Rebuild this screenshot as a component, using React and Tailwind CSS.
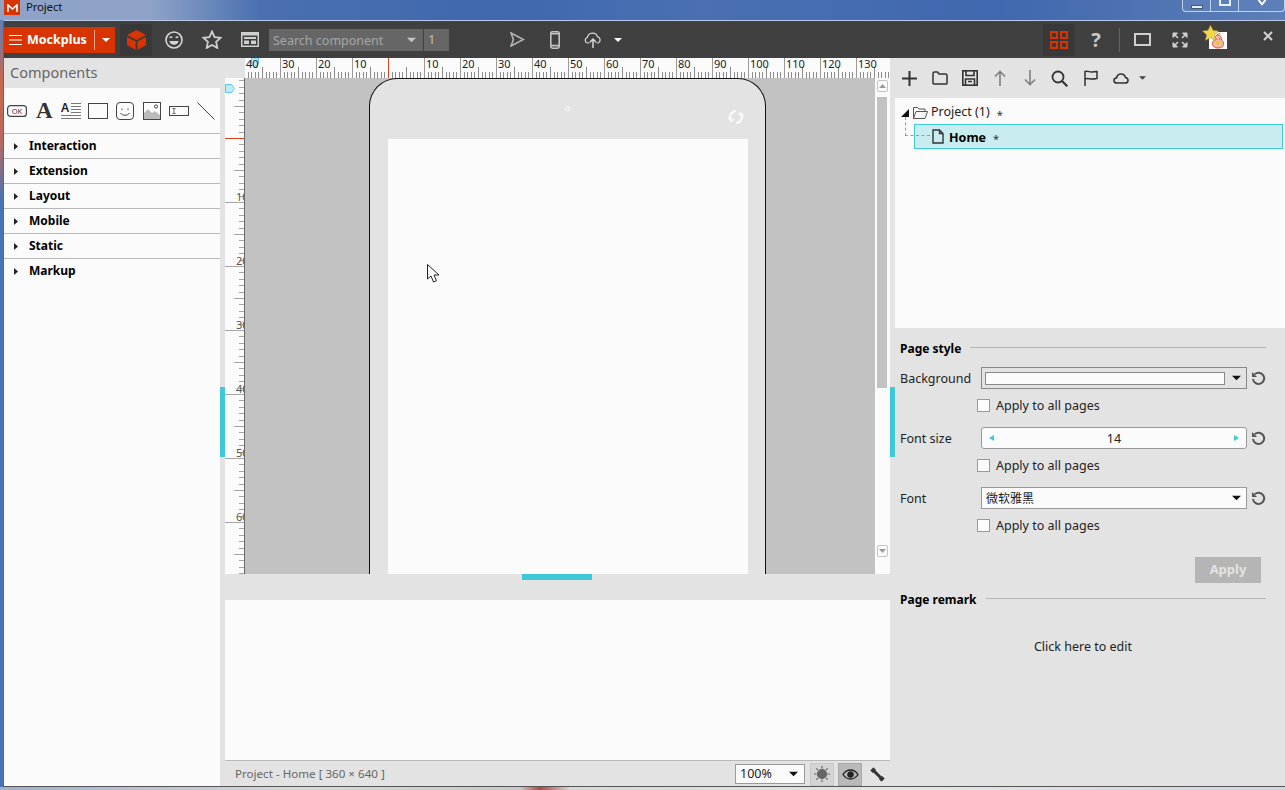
import React from 'react';

const range = (from, to) => Array.from({ length: to - from + 1 }, (_, i) => from + i);

function TopRuler() {
  return (
    <svg width="645" height="20" className="relative block">
      {range(-40, 140).map((i) => {
        const x = Math.round(143 + i * 3.6) + 0.5;
        const top = i % 10 === 0 ? 0 : i % 5 === 0 ? 9 : 14;
        return <line key={i} x1={x} x2={x} y1={top} y2="20" stroke={i === 0 ? '#e0421c' : i % 10 === 0 ? '#9a9a9a' : '#8c8c8c'} />;
      })}
      {range(-4, 13).filter((n) => n !== 0).map((n) => (
        <text key={n} x={143 + n * 36 + 2} y="10" fontSize="11" fill="#222">
          {Math.abs(n) * 10}
        </text>
      ))}
    </svg>
  );
}

function LeftRuler() {
  return (
    <svg width="20" height="496" className="block">
      {range(-9, 68).map((i) => {
        const y = Math.round(60 + i * 6.4) + 0.5;
        const left = i % 10 === 0 ? 0 : i % 5 === 0 ? 9 : 14;
        return <line key={i} x1={left} x2="20" y1={y} y2={y} stroke={i === 0 ? '#e0421c' : '#a6a6a6'} />;
      })}
      {range(1, 6).map((n) => (
        <text key={n} x="11" y={60 + n * 64 - 1} fontSize="11" fill="#555">
          {n * 10}
        </text>
      ))}
      <line x1="19.5" x2="19.5" y1="0" y2="496" stroke="#6a6a6a" />
    </svg>
  );
}

const Caret = ({ color = '#fff', w = 8, h = 4 }) => (
  <svg width={w} height={h} viewBox="0 0 8 4" className="block shrink-0">
    <path d="M0 0h8L4 4z" fill={color} />
  </svg>
);

const Reset = () => (
  <svg width="15" height="15" viewBox="0 0 15 15" fill="none" stroke="#555" strokeWidth="2" className="block shrink-0">
    <path d="M3.6 3.4A5.6 5.6 0 1 1 2 8" />
    <path d="M1 1l5 5H1z" fill="#555" stroke="none" />
  </svg>
);

function ApplyCheck() {
  return (
    <div className="mt-[10px] flex h-[13px] items-center pl-[77px]">
      <span className="h-[13px] w-[13px] border border-[#9a9a9a] bg-[#fbfbfb]" />
      <span className="ml-[6px] pt-[2px] text-[12.5px] leading-none text-[#222]">Apply to all pages</span>
    </div>
  );
}

function SectionTitle({ title }) {
  return (
    <div className="flex h-[20px] items-center">
      <span className="pt-[2px] text-[12px] font-bold text-black">{title}</span>
      <span className="mb-[2px] ml-[9px] h-px flex-1 bg-[#b4b4b4]" />
    </div>
  );
}

function FormRow({ label, children }) {
  return (
    <div className="flex h-[22px] items-center">
      <span className="w-[81px] pt-[2px] text-[12.5px] text-[#222]">{label}</span>
      {children}
      <span className="ml-[4px]">
        <Reset />
      </span>
    </div>
  );
}

const componentGroups = ['Interaction', 'Extension', 'Layout', 'Mobile', 'Static', 'Markup'];

function ComponentIcons() {
  return (
    <div className="flex h-[45px] items-center pl-[3px]">
      <svg width="20" height="12" viewBox="0 0 20 12" className="block">
        <rect x="0.6" y="0.6" width="18.8" height="10.8" rx="3" fill="none" stroke="#444" strokeWidth="1.2" />
        <text x="10" y="8.8" textAnchor="middle" fontSize="7.5" fill="#333">OK</text>
      </svg>
      <span className="ml-[9px] w-[16px] text-center font-['Liberation_Serif',serif] text-[23px] font-bold leading-none text-[#333]">A</span>
      <svg width="20" height="18" viewBox="0 0 20 18" className="ml-[9px] block" stroke="#777">
        <text x="0" y="10" fontSize="12" fill="#222" stroke="none" fontWeight="600">A</text>
        <path d="M10 1.5h10M10 4.5h10M10 7.5h10M10 10.5h10M0 13.5h20M0 16.5h20" />
      </svg>
      <span className="ml-[7px] h-[16px] w-[20px] border border-[#444]" />
      <svg width="18" height="18" viewBox="0 0 18 18" fill="none" stroke="#444" className="ml-[8px] block">
        <rect x="0.5" y="0.5" width="17" height="17" rx="3.5" />
        <path d="M6 6.5v1.5M12 6.5v1.5" />
        <path d="M4.5 11c2 3 7 3 9 0" />
      </svg>
      <svg width="18" height="18" viewBox="0 0 18 18" className="ml-[9px] block">
        <rect x="0.5" y="0.5" width="17" height="17" fill="#fff" stroke="#444" />
        <path d="M1 15V11l4-4 4 4 3-2 5 4v4H1z" fill="#bbb" />
        <circle cx="13" cy="4.5" r="1.6" fill="none" stroke="#444" />
      </svg>
      <svg width="20" height="10" viewBox="0 0 20 10" fill="none" stroke="#444" className="ml-[8px] block">
        <rect x="0.5" y="0.5" width="19" height="9" />
        <path d="M3.5 2.5h3M5 2.5v5M3.5 7.5h3" stroke="#666" />
      </svg>
      <svg width="18" height="18" viewBox="0 0 18 18" stroke="#444" className="ml-[8px] block">
        <path d="M0.5 0.5l17 17" />
      </svg>
    </div>
  );
}

function CenterToolbar() {
  return (
    <>
      <button className="flex h-[26px] w-[111px] items-center bg-[#d93400] pl-[5px] text-white">
        <svg width="13" height="12" viewBox="0 0 13 12" stroke="#fff" className="block">
          <path d="M0 1.5h13M0 6h13M0 10.5h13" />
        </svg>
        <span className="ml-[5px] pt-[2px] text-[12.5px] font-bold">Mockplus</span>
        <span className="ml-[7px] h-[20px] w-px bg-[#f0a68f]" />
        <span className="ml-[7px]">
          <Caret />
        </span>
      </button>
      <div className="ml-[5px] flex h-[32px] w-[32px] items-center justify-center bg-[#383838]">
        <svg width="19" height="20" viewBox="0 0 19 20" className="block">
          <path d="M9.5 0L19 5l-9.5 5L0 5z" fill="#d93400" />
          <path d="M0 7l8.7 4.6V20L0 15z" fill="#d93400" />
          <path d="M19 7l-8.7 4.6V20L19 15z" fill="#d93400" />
        </svg>
      </div>
      <svg width="18" height="18" viewBox="0 0 18 18" fill="none" stroke="#d6d6d6" strokeWidth="1.6" className="ml-[13px] block">
        <circle cx="9" cy="9" r="8" />
        <path d="M5 6.8c.5-1 1.6-1 2 0M11 6.8c.5-1 1.6-1 2 0" />
        <path d="M4.5 10h9c-.3 5-8.7 5-9 0z" fill="#d6d6d6" stroke="none" />
      </svg>
      <svg width="20" height="19" viewBox="0 0 20 19" fill="none" stroke="#d0d0d0" strokeWidth="1.8" className="ml-[19px] block">
        <path d="M10 1.5l2.6 5.6 6 .7-4.5 4.1 1.2 6L10 15l-5.3 2.9 1.2-6L1.4 7.8l6-.7z" />
      </svg>
      <svg width="18" height="15" viewBox="0 0 18 15" className="ml-[19px] block">
        <path d="M0 0h18v15H0z" fill="#cfcfcf" />
        <path d="M1.5 3.5h15v10h-15z" fill="#404040" />
        <path d="M3 5h12v2H3zM3 8.5h5V12H3zM10 8.5h5V12h-5z" fill="#cfcfcf" />
      </svg>
      <div className="ml-[10px] flex h-[22px] w-[154px] items-center bg-[#666666] pl-[4px] pr-[7px]">
        <span className="flex-1 pt-[3px] text-[12.5px] leading-[18px] text-[#a6a6a6]">Search component</span>
        <Caret color="#c4c4c4" w={9} h={6} />
      </div>
      <div className="ml-px flex h-[22px] w-[25px] items-center bg-[#666666] pl-[4px] pt-px text-[13px] text-[#bdbdbd]">1</div>
      <svg width="15" height="15" viewBox="0 0 15 15" fill="none" stroke="#b5b5b5" strokeWidth="1.6" className="ml-[61px] block">
        <path d="M1 1l12.5 6.5L1 14l2.4-6.5z" />
      </svg>
      <svg width="10" height="18" viewBox="0 0 10 18" className="ml-[25px] block">
        <rect x="0.8" y="0.8" width="8.4" height="16.4" rx="1.6" fill="none" stroke="#c4c4c4" strokeWidth="1.6" />
        <path d="M1 2.8h8M1 14.6h8" stroke="#c4c4c4" strokeWidth="1.6" />
      </svg>
      <svg width="18" height="16" viewBox="0 0 17 16" fill="none" stroke="#d8d8d8" strokeWidth="1.2" className="ml-[24px] block">
        <path d="M5 11H3.4a2.8 2.8 0 0 1-.5-5.5A5.2 5.2 0 0 1 13 4.7 3.3 3.3 0 0 1 13.5 11H12" />
        <path d="M8.5 16V7.5M5.4 10.2l3.1-3.2 3.1 3.2" strokeWidth="1.5" />
      </svg>
      <span className="ml-[12px]">
        <Caret w={8} h={4} />
      </span>
    </>
  );
}

function RightToolbar() {
  return (
    <>
      <div className="flex h-[32px] w-[32px] items-center justify-center bg-[#383838]">
        <svg width="18" height="18" viewBox="0 0 18 18" fill="none" stroke="#d93400" strokeWidth="2" className="block">
          <rect x="1" y="1" width="6" height="6" />
          <rect x="11" y="1" width="6" height="6" />
          <rect x="1" y="11" width="6" height="6" />
          <rect x="11" y="11" width="6" height="6" />
        </svg>
      </div>
      <span className="ml-[15px] w-[12px] text-center text-[20px] font-bold leading-none text-[#c8c8c8]">?</span>
      <span className="ml-[17px] h-[24px] w-px bg-[#666]" />
      <span className="ml-[14px] h-[13px] w-[17px] border-2 border-[#d0d0d0]" />
      <svg width="16" height="16" viewBox="0 0 16 16" className="ml-[21px] block" fill="#d0d0d0" stroke="#d0d0d0">
        <path d="M1 1h4.5L1 5.5zM15 1v4.5L10.5 1zM1 15v-4.5L5.5 15zM15 15h-4.5L15 10.5z" />
        <path d="M2 2l4 4M14 2l-4 4M2 14l4-4M14 14l-4-4" strokeWidth="1.6" />
      </svg>
      <div className="relative ml-[21px] mt-[2px] h-[17px] w-[18px] bg-[#fff]">
        <svg width="18" height="17" viewBox="0 0 18 17" className="block">
          <path d="M8 3.5c0-1.500 2.500-2.500 3.500-1.500" fill="none" stroke="#e2452c" />
          <path d="M9 3c3 0 3.500 3 3.500 5 3 1.500 3.500 8-3.500 8S2.500 9.500 5.500 8C5.500 6 6 3 9 3z" fill="#f4b9a2" stroke="#e2562c" />
          <path d="M6.500 10h5l-2.500 3z" fill="#f3c020" />
          <path d="M7.500 7h.8M10 7h.8" stroke="#7a3a20" />
        </svg>
        <svg width="17" height="16" viewBox="0 0 17 16" className="absolute left-[-7px] top-[-7px] block">
          <path d="M8.500 0l2.500 5.200 5.700.7-4.200 3.900 1.100 5.700-5.100-2.800-5.100 2.800 1.100-5.700L.3 5.900 6 5.200z" fill="#f2d64c" stroke="#8a7c3a" strokeWidth="0.5" />
        </svg>
      </div>
      <svg width="10" height="10" viewBox="0 0 10 10" stroke="#d0d0d0" strokeWidth="2" className="mb-[8px] ml-[36px] block">
        <path d="M1 1l8 8M9 1l-8 8" />
      </svg>
    </>
  );
}

function ProjectToolbar() {
  return (
    <div className="flex h-[40px] items-center pl-[6px]">
      <svg width="17" height="17" viewBox="0 0 17 17" stroke="#333" strokeWidth="2" className="block">
        <path d="M8.5 1v15M1 8.5h15" />
      </svg>
      <svg width="16" height="14" viewBox="0 0 16 14" fill="none" stroke="#333" strokeWidth="1.5" className="ml-[14px] block">
        <path d="M1 12.200V2.500C1 1.500 1.500 1 2.500 1h3L7 3h6.500c1 0 1.500.5 1.500 1.500v7.700c0 .5-.3.8-.8.8H1.800c-.5 0-.8-.3-.8-.8z" />
      </svg>
      <svg width="16" height="16" viewBox="0 0 16 16" fill="none" stroke="#333" strokeWidth="1.6" className="ml-[14px] block">
        <rect x="0.8" y="0.8" width="14.4" height="14.4" />
        <path d="M4 1v4.500h8V1M3.500 15V9h9v6M6 11.500h4" />
      </svg>
      <svg width="12" height="16" viewBox="0 0 12 16" fill="none" stroke="#808080" strokeWidth="1.6" className="ml-[16px] block">
        <path d="M6 16V2M1 6.500L6 1.500l5 5" />
      </svg>
      <svg width="12" height="16" viewBox="0 0 12 16" fill="none" stroke="#808080" strokeWidth="1.6" className="ml-[18px] block">
        <path d="M6 0v14M1 9.500l5 5 5-5" />
      </svg>
      <svg width="17" height="17" viewBox="0 0 17 17" fill="none" stroke="#333" strokeWidth="1.8" className="ml-[15px] block">
        <circle cx="7" cy="7" r="5.500" />
        <path d="M11 11l5.300 5.300" strokeWidth="2.200" />
      </svg>
      <svg width="14" height="16" viewBox="0 0 14 16" fill="none" stroke="#333" strokeWidth="1.5" className="ml-[16px] block">
        <path d="M1 16V1.500c3-1 4 .5 6 .5s4-.5 6-.5v7c-2 .5-4 .5-6 .5s-3-1-6 0" />
      </svg>
      <svg width="16" height="11" viewBox="0 0 16 11" fill="none" stroke="#333" strokeWidth="1.6" className="ml-[15px] block">
        <path d="M4 10C2 10 1 8.800 1 7.400 1 6 2 5 3.500 5 4 2.500 6 1 8 1s4 1.500 4.500 3.500C14 4.800 15 6 15 7.400c0 1.400-1 2.600-3 2.600z" />
      </svg>
      <span className="ml-[10px]">
        <Caret color="#444" w={7} h={4} />
      </span>
    </div>
  );
}

export default function App() {
  return (
    <div className="flex h-[790px] w-[1285px] flex-col overflow-hidden bg-[#3f68ad] font-['Noto_Sans','Noto_Sans_CJK_SC',sans-serif]">
      {/* Title bar */}
      <div className="flex h-[20px] shrink-0 bg-[linear-gradient(90deg,#8fa3c8_0px,#8fa3c8_150px,#4a70b0_260px,#3f68ad_500px,#4a70b3_700px,#4068ae_1000px,#5c7fb8_1285px)]">
        <div className="ml-[4px] flex h-[15px] w-[16px] items-center justify-center bg-[#d93400]">
          <svg width="11" height="8" viewBox="0 0 11 8" fill="none" stroke="#fff" strokeWidth="1.6" className="block">
            <path d="M1 8V1l4.500 4L10 1v7" />
          </svg>
        </div>
        <span className="ml-[6px] text-[11.5px] leading-[14px] tracking-[-0.2px] text-[#111]">Project</span>
        <div className="ml-auto flex h-[12px] w-[103px] rounded-b-[4px] border border-t-0 border-[#c3d2ea] bg-[#5c7fb9]">
          <div className="flex w-[28px] items-end justify-center border-r border-[#c3d2ea] pb-[2px]">
            <span className="h-[4px] w-[12px] border border-[#44587c] bg-[#e9eef6]" />
          </div>
          <div className="flex w-[28px] items-start justify-center border-r border-[#c3d2ea]">
            <span className="h-[6px] w-[12px] border-2 border-t-0 border-[#e9eef6]" />
          </div>
          <div className="flex flex-1 justify-center">
            <svg width="10" height="6" viewBox="0 0 10 6" stroke="#fff" strokeWidth="2" className="block">
              <path d="M1.500 0l4 5M8.500 0l-4 5" />
            </svg>
          </div>
        </div>
      </div>

      <div className="flex min-h-0 flex-1">
        {/* Desktop peeking out on the left */}
        <div className="w-[3px] bg-[linear-gradient(180deg,#5d80b8_0px,#c8674f_60px,#b86a60_120px,#4a72b5_180px,#4a72b5_790px)]" />

        {/* Window */}
        <div className="flex w-[1282px] flex-col border-y border-b-[#555] border-l border-l-[#666] border-t-[#b9cbe6] bg-[#e3e3e3]">
          <div className="flex h-[37px] shrink-0 items-center bg-[#404040]">
            <div className="flex items-center">
              <CenterToolbar />
            </div>
            <div className="ml-auto flex items-center pr-[12px]">
              <RightToolbar />
            </div>
          </div>

          <div className="flex min-h-0 flex-1">
            {/* Components panel */}
            <aside className="flex w-[216px] shrink-0 flex-col">
              <div className="flex h-[30px] items-center pb-[1px] pl-[6px] text-[14.5px] text-[#666]">Components</div>
              <div className="flex-1 bg-[#fbfbfb]">
                <ComponentIcons />
                {componentGroups.map((name) => (
                  <div key={name} className="flex h-[25px] items-center border-t border-[#b8b8b8] pl-[10px]">
                    <svg width="4" height="7" viewBox="0 0 4 7" className="block">
                      <path d="M0 0l4 3.500L0 7z" fill="#222" />
                    </svg>
                    <span className="ml-[11px] text-[12px] font-bold text-black">{name}</span>
                  </div>
                ))}
              </div>
            </aside>

            <div className="w-[5px] shrink-0">
              <div className="mt-[329px] h-[70px] bg-[#3fc8d8]" />
            </div>

            {/* Center */}
            <section className="flex w-[665px] shrink-0 flex-col">
              <div className="flex h-[20px] shrink-0">
                <div className="w-[20px]" />
                <div className="relative w-[645px] overflow-hidden bg-[#fbfbfb]">
                  <svg width="8" height="10" viewBox="0 0 8 10" className="absolute left-[6px] top-0 block">
                    <path d="M.5 0v6L4 9.500 7.500 6V0z" fill="#bdeef8" stroke="#5cc6e6" />
                  </svg>
                  <TopRuler />
                </div>
              </div>
              <div className="flex h-[496px] shrink-0">
                <div className="relative w-[20px] overflow-hidden bg-[#fbfbfb]">
                  <LeftRuler />
                  <svg width="10" height="9" viewBox="0 0 10 9" className="absolute left-0 top-[6px] block">
                    <path d="M.5.500h6L9.500 4.500l-3 4h-6z" fill="#bdeef8" stroke="#5cc6e6" />
                  </svg>
                </div>
                <div className="flex w-[630px] overflow-hidden bg-[#c2c2c2] pl-[124px]">
                  <div className="relative flex h-[800px] w-[397px] shrink-0 flex-col items-center rounded-t-[28px] border-x border-t border-[#111] bg-[#e3e3e3]">
                    <span className="mt-[27px] h-[5px] w-[5px] rounded-full border border-[#fbfbfb]" />
                    <div className="relative mt-[28px] h-[640px] w-[360px] bg-[#fbfbfb]">
                      {/* Mouse pointer over the page */}
                      <svg width="14" height="20" viewBox="0 0 14 20" className="absolute left-[39px] top-[125px] block">
                        <path d="M.5.500v14.500l3.500-3 2.500 6 3-1.300-2.500-5.700h5z" fill="#fbfbfb" stroke="#222" />
                      </svg>
                    </div>
                    <svg width="18" height="18" viewBox="0 0 18 18" fill="none" stroke="#fbfbfb" strokeWidth="2" className="absolute right-[20px] top-[29px] block">
                      <path d="M9 3A6 6 0 0 0 4 12" />
                      <path d="M1.500 9.500L4 13l3-2" strokeWidth="1.500" />
                      <path d="M9 15a6 6 0 0 0 5-9" />
                      <path d="M16.500 8.500L14 5l-3 2" strokeWidth="1.500" />
                    </svg>
                  </div>
                </div>
                <div className="flex w-[15px] flex-col items-center bg-[#fbfbfb] pt-[2px]">
                  <div className="flex h-[12px] w-[11px] items-center justify-center rounded-[2px] border border-[#c4c4c4]">
                    <svg width="7" height="4" viewBox="0 0 7 4" className="block">
                      <path d="M0 4h7L3.500 0z" fill="#999" />
                    </svg>
                  </div>
                  <div className="ml-[-1px] mt-[5px] h-[291px] w-[10px] bg-[#c2c2c2]" />
                  <div className="mt-[157px] flex h-[12px] w-[11px] items-center justify-center rounded-[2px] border border-[#c4c4c4]">
                    <svg width="7" height="4" viewBox="0 0 7 4" className="block">
                      <path d="M0 0h7L3.500 4z" fill="#999" />
                    </svg>
                  </div>
                </div>
              </div>
              <div className="h-[26px] shrink-0 pl-[297px]">
                <div className="h-[6px] w-[70px] bg-[#3fc8d8]" />
              </div>
              <div className="h-[160px] shrink-0 bg-[#fbfbfb]" />
              <div className="flex h-[26px] shrink-0 items-center border-t border-[#b8b8b8] pl-[10px] pt-[1px]">
                <span className="text-[11.6px] text-[#666]">Project - Home [ 360 × 640 ]</span>
                <div className="ml-auto flex items-center pr-[2px]">
                  <div className="flex h-[20px] w-[70px] items-center justify-between border border-[#999] bg-[#fbfbfb] pl-[4px] pr-[6px] text-[12.5px] text-[#222]">
                    100%
                    <Caret color="#111" w={9} h={6} />
                  </div>
                  <div className="ml-[5px] flex h-[23px] w-[24px] items-center justify-center border border-[#c8c8c8] bg-[#d4d4d4]">
                    <svg width="16" height="16" viewBox="0 0 16 16" stroke="#666" strokeWidth="1.2" className="block">
                      <circle cx="8" cy="8" r="4.500" fill="#666" />
                      <path d="M8 0v2.500M8 13.500V16M0 8h2.500M13.500 8H16M2.300 2.300l1.800 1.800M11.900 11.900l1.800 1.800M2.300 13.700l1.800-1.800M11.900 4.100l1.800-1.800" />
                    </svg>
                  </div>
                  <div className="ml-[4px] flex h-[23px] w-[24px] items-center justify-center border border-[#a8a8a8] bg-[#b9b9b9]">
                    <svg width="17" height="11" viewBox="0 0 17 11" fill="none" stroke="#222" strokeWidth="1.3" className="block">
                      <path d="M1 5.500C3 2.300 5.500 1 8.500 1s5.500 1.300 7.500 4.500C14 8.700 11.500 10 8.500 10S3 8.700 1 5.500z" />
                      <circle cx="8.500" cy="5.500" r="2.600" fill="#222" />
                    </svg>
                  </div>
                  <svg width="15" height="15" viewBox="0 0 15 15" fill="none" stroke="#333" className="ml-[8px] mr-[3px] block">
                    <path d="M4 4l7.500 7.500" strokeWidth="3" />
                    <path d="M.8 3.500L3.500.8 5.500 3 3 5.500zM14.200 11.500l-2.700 2.700-2-2.200 2.500-2.500z" fill="#333" strokeWidth="1" />
                  </svg>
                </div>
              </div>
            </section>

            <div className="w-[5px] shrink-0">
              <div className="mt-[329px] h-[70px] bg-[#3fc8d8]" />
            </div>

            {/* Project panel */}
            <aside className="flex w-[390px] shrink-0 flex-col">
              <ProjectToolbar />
              <div className="relative h-[230px] shrink-0 bg-[#fbfbfb] pt-px">
                <div className="flex h-[25px] items-center pl-[6px] pt-[2px]">
                  <svg width="8" height="8" viewBox="0 0 8 8" className="block">
                    <path d="M8 0v8H0z" fill="#111" />
                  </svg>
                  <svg width="16" height="13" viewBox="0 0 16 13" fill="none" stroke="#555" className="ml-[3px] block">
                    <path d="M1.500 12.500V1.500h4l1.500 1.500h6v2.500" />
                    <path d="M1.500 12.500l2.500-7h11.500l-2.500 7z" />
                  </svg>
                  <span className="ml-[3px] text-[12.5px] text-[#222]">Project (1)</span>
                  <span className="ml-[7px] mt-[4px] text-[11px] leading-none text-[#333]">*</span>
                </div>
                <div className="ml-[19px] mr-[2px] flex h-[25px] items-center border border-[#3fc8d8] bg-[#c9ecf0] pl-[17px]">
                  <svg width="12" height="15" viewBox="0 0 12 15" fill="none" stroke="#333" strokeWidth="1.4" className="block">
                    <path d="M1 1h6.500L11 4.500V14H1zM7.500 1v3.500H11" />
                  </svg>
                  <span className="ml-[5px] pt-[2px] text-[12.5px] font-bold leading-[17px] text-black">Home</span>
                  <span className="ml-[7px] mt-[4px] text-[11px] leading-none text-[#333]">*</span>
                </div>
                <div className="absolute left-[10px] top-[19px] h-[19px] w-[25px] border-b border-l border-dashed border-[#999]" />
              </div>

              <div className="flex-1 pl-[5px] pr-[19px] pt-[10px]">
                <SectionTitle title="Page style" />
                <div className="mt-[9px]">
                  <FormRow label="Background">
                    <div className="flex h-[22px] w-[266px] items-center border border-[#888] pl-[3px] pr-[5px]">
                      <span className="h-[13px] w-[240px] border border-[#888] bg-[#fbfbfb]" />
                      <span className="ml-auto">
                        <Caret color="#111" w={9} h={6} />
                      </span>
                    </div>
                  </FormRow>
                </div>
                <ApplyCheck />
                <div className="mt-[15px]">
                  <FormRow label="Font size">
                    <div className="flex h-[22px] w-[266px] items-center justify-between rounded-[3px] border border-[#999] bg-[#fbfbfb] px-[7px] text-[12.5px] text-[#222]">
                      <svg width="5" height="6" viewBox="0 0 5 6" className="block">
                        <path d="M5 0v6L0 3z" fill="#3fc8d8" />
                      </svg>
                      <span className="pt-[2px]">14</span>
                      <svg width="5" height="6" viewBox="0 0 5 6" className="block">
                        <path d="M0 0v6l5-3z" fill="#3fc8d8" />
                      </svg>
                    </div>
                  </FormRow>
                </div>
                <ApplyCheck />
                <div className="mt-[15px]">
                  <FormRow label="Font">
                    <div className="flex h-[22px] w-[266px] items-center justify-between border border-[#999] bg-[#fbfbfb] pl-[4px] pr-[5px] text-[12px] text-[#222]">
                      <span className="pt-[2px]">微软雅黑</span>
                      <Caret color="#111" w={9} h={6} />
                    </div>
                  </FormRow>
                </div>
                <ApplyCheck />
                <div className="mr-[5px] mt-[25px] flex justify-end">
                  <button className="h-[26px] w-[66px] bg-[#b5b5b5] text-[13px] font-bold text-[#e3e3e3]">Apply</button>
                </div>
                <div className="mt-[6px]">
                  <SectionTitle title="Page remark" />
                </div>
                <div className="mt-[29px] text-center text-[12.5px] text-[#222]">Click here to edit</div>
              </div>
            </aside>
          </div>
        </div>
      </div>

      {/* Desktop peeking out at the bottom */}
      <div className="h-[3px] shrink-0 bg-[linear-gradient(90deg,#9fb0cc_0px,#d8d8d8_300px,#c9c9c9_520px,#b04a40_540px,#d8d8d8_570px,#e4e4e4_900px,#cfd6e2_1285px)]" />
    </div>
  );
}
